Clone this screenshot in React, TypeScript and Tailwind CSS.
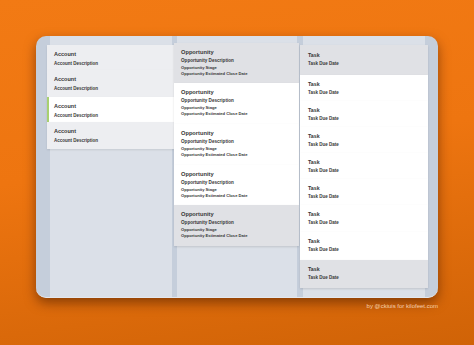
import React from "react";

type Tone = "grey" | "white" | "light";

const toneClass: Record<Tone, string> = {
  grey: "bg-[#e0e1e5]",
  white: "bg-white",
  light: "bg-[#edeef1]",
};

const accounts = [
  { h: "h-[25px]", selected: false },
  { h: "h-[27px]", selected: false },
  { h: "h-[25px]", selected: true },
  { h: "h-[27px]", selected: false },
];

const opportunities: { h: string; tone: Tone }[] = [
  { h: "h-[40px]", tone: "grey" },
  { h: "h-[41px]", tone: "white" },
  { h: "h-[41px]", tone: "white" },
  { h: "h-[40px]", tone: "white" },
  { h: "h-[41px]", tone: "grey" },
];

const tasks: { h: string; tone: Tone; pt: string }[] = [
  { h: "h-[30px]", tone: "grey", pt: "pt-[7px]" },
  { h: "h-[26px]", tone: "white", pt: "pt-[6px]" },
  { h: "h-[26px]", tone: "white", pt: "pt-[6px]" },
  { h: "h-[26px]", tone: "white", pt: "pt-[6px]" },
  { h: "h-[26px]", tone: "white", pt: "pt-[6px]" },
  { h: "h-[26px]", tone: "white", pt: "pt-[6px]" },
  { h: "h-[27px]", tone: "white", pt: "pt-[6px]" },
  { h: "h-[28px]", tone: "white", pt: "pt-[6px]" },
  { h: "h-[28px]", tone: "grey", pt: "pt-[6px]" },
];

export default function App() {
  return (
    <div
      className="w-[474px] h-[345px] overflow-hidden pt-[36px] pl-[36px] bg-[linear-gradient(172deg,#f27a14_0%,#ee7510_45%,#d06307_100%)] text-[#363636]"
      style={{ fontFamily: '"Liberation Sans", Arial, sans-serif' }}
    >
      {/* Board */}
      <div className="w-[402px] h-[262px] rounded-[10px] overflow-hidden bg-[#c5cedb] border-b border-[#e4e8ee] shadow-[0_5px_12px_rgba(70,25,0,0.55)] flex pl-[14px] gap-[5px]">
        {/* Accounts */}
        <div className="w-[122px] h-full bg-[#dbe0e8] pt-[9px] flex flex-col">
          {accounts.map((a, i) => (
            <div
              key={i}
              className={`${a.h} -ml-[3px] -mr-[2px] pt-[6px] shadow-[0_1px_2px_rgba(0,0,0,0.1)] ${
                a.selected ? "bg-white border-l-2 border-[#a8d070] pl-[5px]" : "bg-[#edeef1] pl-[7px]"
              }`}
            >
              <div className="text-[5.5px] leading-[7px] font-bold">Account</div>
              <div className="mt-[3px] text-[4.5px] leading-[6px] font-bold">Account Description</div>
            </div>
          ))}
        </div>

        {/* Opportunities */}
        <div className="w-[120px] h-full bg-[#dbe0e8] pt-[7px] flex flex-col">
          {opportunities.map((o, i) => (
            <div
              key={i}
              className={`${o.h} ${toneClass[o.tone]} -ml-[3px] -mr-[2px] pl-[7px] pt-[6px] shadow-[0_1px_2px_rgba(0,0,0,0.12)]`}
            >
              <div className="text-[5.7px] leading-[7px] font-bold">Opportunity</div>
              <div className="mt-[2px] text-[4.6px] leading-[6px] font-bold">Opportunity Description</div>
              <div className="mt-[1px] text-[4.1px] leading-[6px] font-bold">Opportunity Stage</div>
              <div className="text-[4.1px] leading-[6.5px] font-bold">Opportunity Estimated Close Date</div>
            </div>
          ))}
        </div>

        {/* Tasks */}
        <div className="ml-[1px] w-[122px] h-full bg-[#dbe0e8] pt-[9px] flex flex-col">
          {tasks.map((t, i) => (
            <div
              key={i}
              className={`${t.h} ${t.pt} ${toneClass[t.tone]} -mx-[3px] pl-[8px] shadow-[0_1px_2px_rgba(0,0,0,0.12)]`}
            >
              <div className="text-[5.3px] leading-[7px] font-bold">Task</div>
              <div className="mt-[2.4px] text-[4.5px] leading-[6px] font-bold">Task Due Date</div>
            </div>
          ))}
        </div>
      </div>

      <div className="w-[402px] mt-[5px] text-right text-[6px] leading-[7px] text-[#f6cfae]">
        by @ckiuis for kilofeet.com
      </div>
    </div>
  );
}
